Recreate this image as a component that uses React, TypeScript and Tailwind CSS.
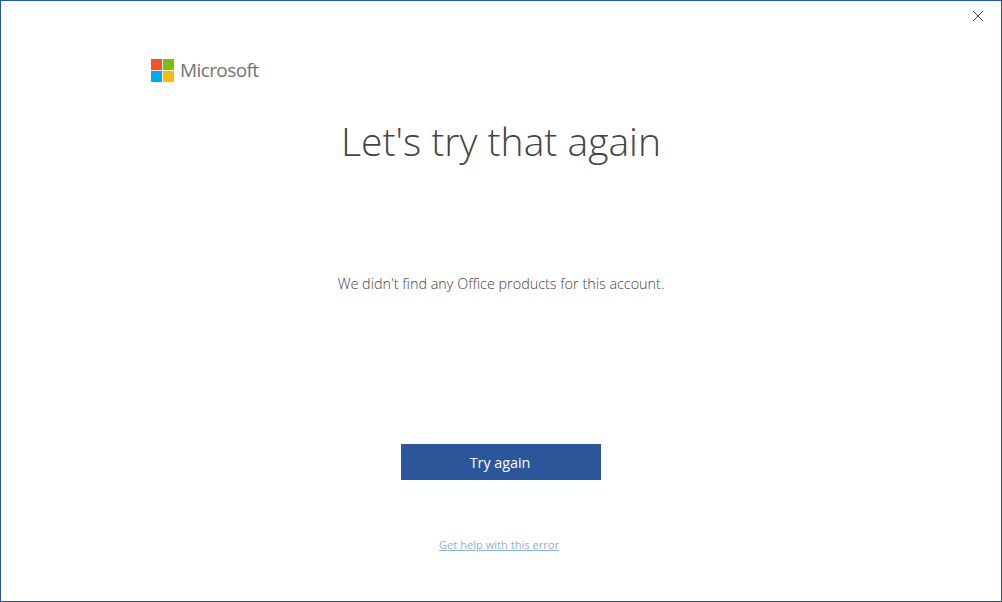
import React from 'react';

const MicrosoftLogo: React.FC = () => (
  <div className="grid grid-cols-[11px_11px] grid-rows-[11px_11px] gap-px">
    <div className="bg-[#f35325]"></div>
    <div className="bg-[#81bc06]"></div>
    <div className="bg-[#05a6f0]"></div>
    <div className="bg-[#ffba08]"></div>
  </div>
);

const App: React.FC = () => {
  return (
    <div className="relative w-[1002px] h-[602px] bg-white border border-[#2b579a] overflow-hidden flex flex-col items-center font-['Open_Sans',sans-serif]">
      <button className="absolute top-[9px] right-[17px] w-[12px] h-[12px] text-[#444]">
        <svg width="12" height="12" viewBox="0 0 12 12" fill="none" stroke="currentColor" strokeWidth="1">
          <path d="M1 1L11 11M11 1L1 11" />
        </svg>
      </button>

      <div className="w-full pl-[150px] pt-[57px] flex items-center gap-[6px]">
        <MicrosoftLogo />
        <span className="text-[19px] leading-[24px] font-medium text-[#737373] tracking-[-0.6px]">Microsoft</span>
      </div>

      <h1 className="mt-[34px] text-[39px] leading-[50px] font-light text-[#444444]">Let's try that again</h1>

      <p className="mt-[108px] text-[14.4px] leading-[20px] font-light text-[#444444]">
        We didn't find any Office products for this account.
      </p>

      <button className="mt-[150px] w-[200px] h-[36px] pt-px bg-[#2b579a] text-white text-[14.3px] leading-[20px] pr-[2px]">Try again</button>

      <a className="mt-[57px] mr-[4px] text-[11.1px] leading-[16px] text-[#8fb0d3] underline">Get help with this error</a>
    </div>
  );
};

export default App;
